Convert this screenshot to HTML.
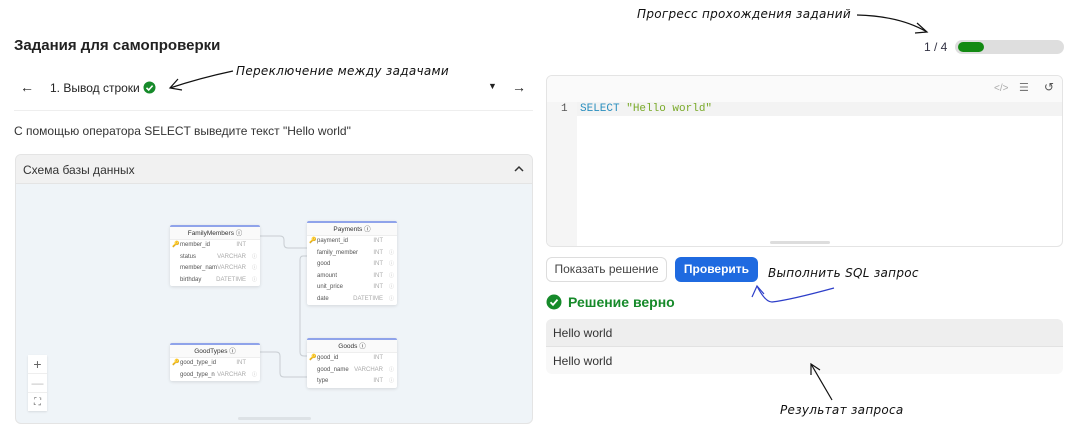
<!DOCTYPE html>
<html><head><meta charset="utf-8"><style>
*{box-sizing:border-box;margin:0;padding:0}
body{width:1080px;height:439px;background:#fff;font-family:"Liberation Sans","DejaVu Sans",sans-serif;color:#222;position:relative;overflow:hidden}
.a{position:absolute}
.hand{font-family:"DejaVu Sans",sans-serif;font-style:italic;font-size:12px;color:#111;letter-spacing:0.3px;white-space:nowrap}
.tbl{position:absolute;width:90px;background:#fff;border-top:2px solid #8fa3ea;box-shadow:0 1px 3px rgba(0,0,0,.12);border-radius:2px;font-size:6px;color:#555}
.tbl .h{height:13px;line-height:13px;text-align:center;font-size:6.5px;color:#333;background:#fafafa;border-bottom:1px solid #eee}
.tbl .r{height:11.5px;line-height:11.5px;position:relative;padding-left:10px}
.tbl .r .t{position:absolute;right:14px;color:#aaa}
.tbl .r .k{position:absolute;left:2px;color:#f0a020;font-size:6px}
.tbl .r .o{position:absolute;right:3px;color:#bbb;font-size:5px}
</style></head><body>

<div class="a" style="left:14px;top:37px;font-size:15px;font-weight:bold;color:#222">Задания для самопроверки</div>
<div class="a" style="left:924px;top:40px;font-size:12px;color:#334">1 / 4</div>
<div class="a" style="left:955px;top:40px;width:109px;height:14px;border-radius:7px;background:#dedede"></div>
<div class="a" style="left:958px;top:42px;width:26px;height:10px;border-radius:5px;background:#138a13"></div>

<div class="a" style="left:20px;top:79px;font-size:14px">←</div>
<div class="a" style="left:50px;top:81px;font-size:12px">1. Вывод строки</div>
<svg class="a" style="left:143px;top:81px" width="13" height="13"><circle cx="6.5" cy="6.5" r="6" fill="#168a2a"/><path d="M3.5 6.8 L5.7 9 L9.6 4.6" stroke="#fff" stroke-width="1.6" fill="none"/></svg>
<div class="a" style="left:488px;top:81px;font-size:9px">▼</div>
<div class="a" style="left:512px;top:79px;font-size:14px">→</div>
<div class="a" style="left:14px;top:110px;width:519px;height:1px;background:#eee"></div>
<div class="a" style="left:14px;top:124px;font-size:12px;color:#333">С помощью оператора SELECT выведите текст "Hello world"</div>

<div class="a" style="left:15px;top:154px;width:518px;height:270px;border:1px solid #e4e4e4;border-radius:6px;background:#eff4f8;overflow:hidden">
 <div style="height:29px;background:#f1f1f1;border-bottom:1px solid #e4e4e4;padding:8px 7px;font-size:12px;color:#333">Схема базы данных</div>
 <svg class="a" style="right:8px;top:10px" width="10" height="8"><path d="M1 6 L5 2 L9 6" stroke="#333" stroke-width="1.5" fill="none"/></svg>
 <div class="a" style="left:12px;top:200px;width:19px;height:56px;background:#fff;box-shadow:0 1px 2px rgba(0,0,0,.1)">
  <div style="height:18px;text-align:center;font-size:14px;line-height:18px;color:#666">+</div>
  <div style="height:19px;text-align:center;font-size:12px;line-height:19px;color:#bbb;border-top:1px solid #eee">—</div>
  <div style="height:19px;text-align:center;font-size:10px;line-height:19px;color:#666;border-top:1px solid #eee">⛶</div>
 </div>
 <div class="a" style="left:222px;top:262px;width:73px;height:3px;border-radius:2px;background:#dde2e6"></div>
</div>

<svg class="a" style="left:15px;top:154px" width="518" height="270">
 <path d="M245 82 H265 Q269 82 269 86 V90 Q269 94 273 94 H292" stroke="#c8cdd2" fill="none"/>
 <path d="M292 102 H288 Q285 102 285 106 V198 Q285 202 289 202 H292" stroke="#c8cdd2" fill="none"/>
 <path d="M245 198 H261 Q265 198 265 202 V219 Q265 223 269 223 H292" stroke="#c8cdd2" fill="none"/>
</svg>

<div class="tbl" style="left:170px;top:225px">
 <div class="h">FamilyMembers ⓘ</div>
 <div class="r"><span class="k">🔑</span>member_id<span class="t">INT</span></div>
 <div class="r">status<span class="t">VARCHAR</span><span class="o">ⓘ</span></div>
 <div class="r">member_nam<span class="t">VARCHAR</span><span class="o">ⓘ</span></div>
 <div class="r">birthday<span class="t">DATETIME</span><span class="o">ⓘ</span></div>
</div>
<div class="tbl" style="left:307px;top:221px">
 <div class="h">Payments ⓘ</div>
 <div class="r"><span class="k">🔑</span>payment_id<span class="t">INT</span></div>
 <div class="r">family_member<span class="t">INT</span><span class="o">ⓘ</span></div>
 <div class="r">good<span class="t">INT</span><span class="o">ⓘ</span></div>
 <div class="r">amount<span class="t">INT</span><span class="o">ⓘ</span></div>
 <div class="r">unit_price<span class="t">INT</span><span class="o">ⓘ</span></div>
 <div class="r">date<span class="t">DATETIME</span><span class="o">ⓘ</span></div>
</div>
<div class="tbl" style="left:170px;top:343px">
 <div class="h">GoodTypes ⓘ</div>
 <div class="r"><span class="k">🔑</span>good_type_id<span class="t">INT</span></div>
 <div class="r">good_type_n<span class="t">VARCHAR</span><span class="o">ⓘ</span></div>
</div>
<div class="tbl" style="left:307px;top:338px">
 <div class="h">Goods ⓘ</div>
 <div class="r"><span class="k">🔑</span>good_id<span class="t">INT</span></div>
 <div class="r">good_name<span class="t">VARCHAR</span><span class="o">ⓘ</span></div>
 <div class="r">type<span class="t">INT</span><span class="o">ⓘ</span></div>
</div>

<!-- editor -->
<div class="a" style="left:546px;top:75px;width:517px;height:172px;border:1px solid #e4e4e4;border-radius:6px;overflow:hidden;background:#fff">
 <div style="height:26px;background:#fafafa"></div>
 <div class="a" style="left:0;top:26px;width:30px;height:146px;background:#f5f5f5"></div>
 <div class="a" style="left:30px;top:26px;width:487px;height:14px;background:#f3f3f3"></div>
 <div class="a" style="left:14px;top:27px;font-family:'Liberation Mono',monospace;font-size:11px;color:#555">1</div>
 <div class="a" style="left:33px;top:27px;font-family:'Liberation Mono',monospace;font-size:11px"><span style="color:#2a8fbf">SELECT</span> <span style="color:#7aaa2a">"Hello world"</span></div>
 <div class="a" style="left:223px;top:165px;width:60px;height:3px;border-radius:2px;background:#ddd"></div>
 <div class="a" style="left:447px;top:7px;font-size:10px;color:#aaa">&lt;/&gt;</div>
 <div class="a" style="left:472px;top:5px;font-size:11px;color:#777">☰</div>
 <div class="a" style="left:497px;top:4px;font-size:12px;color:#555">↺</div>
</div>

<div class="a" style="left:546px;top:257px;width:121px;height:25px;border:1px solid #ddd;border-radius:6px;font-size:12px;color:#444;text-align:center;line-height:23px">Показать решение</div>
<div class="a" style="left:675px;top:257px;width:83px;height:25px;border-radius:6px;background:#1f6ae0;font-size:12px;font-weight:bold;color:#fff;text-align:center;line-height:25px">Проверить</div>

<svg class="a" style="left:546px;top:294px" width="16" height="16"><circle cx="8" cy="8" r="7.5" fill="#168a2a"/><path d="M4.5 8.3 L7 10.8 L11.5 5.6" stroke="#fff" stroke-width="1.8" fill="none"/></svg>
<div class="a" style="left:568px;top:294px;font-size:14px;font-weight:bold;color:#168a2a">Решение верно</div>

<div class="a" style="left:546px;top:319px;width:517px;height:55px;border-radius:6px;overflow:hidden;background:#f8f8f8">
 <div style="height:28px;background:#eeeeee;border-bottom:1px solid #e2e2e2;padding:7px 7px;font-size:12px;color:#333">Hello world</div>
 <div style="padding:7px 7px;font-size:12px;color:#333">Hello world</div>
</div>

<!-- annotations -->
<div class="a hand" style="left:637px;top:7px">Прогресс прохождения заданий</div>
<div class="a hand" style="left:236px;top:64px">Переключение между задачами</div>
<div class="a hand" style="left:768px;top:266px">Выполнить SQL запрос</div>
<div class="a hand" style="left:780px;top:403px">Результат запроса</div>
<svg class="a" style="left:0;top:0" width="1080" height="439">
 <path d="M857 15 Q900 16 927 32" stroke="#111" stroke-width="1.2" fill="none"/>
 <path d="M917 23 L927 32 L915 33" stroke="#111" stroke-width="1.2" fill="none"/>
 <path d="M233 71 Q200 78 170 88" stroke="#111" stroke-width="1.2" fill="none"/>
 <path d="M178 79 L170 88 L182 90" stroke="#111" stroke-width="1.2" fill="none"/>
 <path d="M834 288 Q790 300 772 302 Q765 302 757 286" stroke="#2e3fc9" stroke-width="1.2" fill="none"/>
 <path d="M752 297 L757 286 L764 294" stroke="#2e3fc9" stroke-width="1.2" fill="none"/>
 <path d="M832 400 L811 364" stroke="#111" stroke-width="1.2" fill="none"/>
 <path d="M811 375 L811 364 L820 370" stroke="#111" stroke-width="1.2" fill="none"/>
</svg>
</body></html>
